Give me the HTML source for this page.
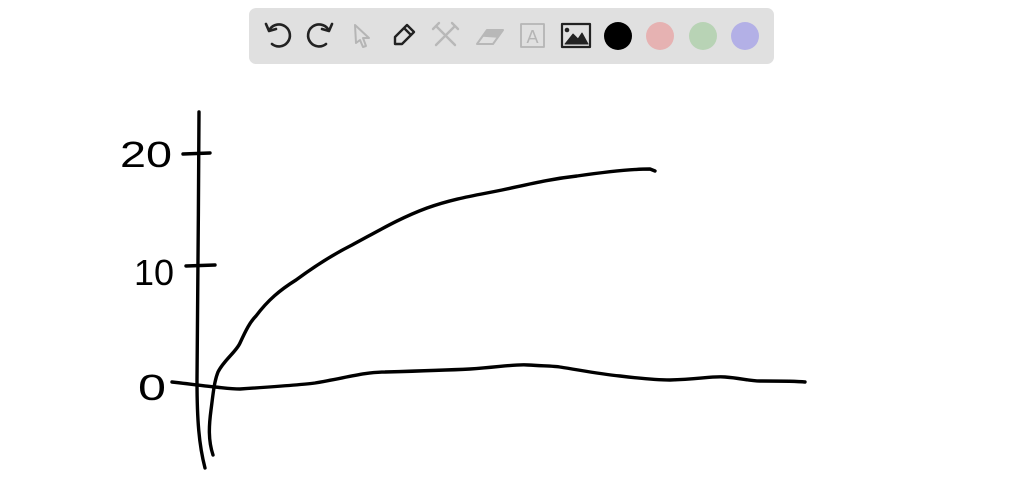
<!DOCTYPE html>
<html><head><meta charset="utf-8"><style>
html,body{margin:0;padding:0;background:#fff;width:1024px;height:490px;overflow:hidden}
.tb{position:absolute;left:249px;top:8px;width:525px;height:56px;background:#e0e0e0;border-radius:7px}
svg{position:absolute;left:0;top:0}
</style></head><body>
<div class="tb"></div>
<svg width="1024" height="490" viewBox="0 0 1024 490">
<g fill="none" stroke-linecap="round" stroke-linejoin="round">
<!-- undo -->
<path d="M270 29 A11 11 0 1 1 272 44" stroke="#222" stroke-width="2.6"/>
<path d="M266 24 L269 31 L276 29" stroke="#222" stroke-width="2.6"/>
<!-- redo -->
<path d="M328 29 A11 11 0 1 0 326 44" stroke="#222" stroke-width="2.6"/>
<path d="M332 24 L329 31 L322 29" stroke="#222" stroke-width="2.6"/>
<!-- pointer -->
<path d="M355 25 L369 38 L363 38 L366 46 L363 47 L360 40 L356 43 Z" stroke="#b5b5b5" stroke-width="2"/>
<!-- pencil -->
<path d="M395 44 L395 37 L407 25 L414 32 L402 44 Z M404 28 L411 35" stroke="#222" stroke-width="2.4"/>
<!-- tools -->
<path d="M436 26 L455 45 M455 26 L436 45 M433 29 L439 23 M452 23 L458 29" stroke="#b8b8b8" stroke-width="2.4"/>
<!-- eraser -->
<path d="M477 44 L487 30 L503 30 L493 44 Z" stroke="#b8b8b8" stroke-width="2"/>
<path d="M483 36 L487 30 L503 30 L498 37 Z" fill="#b8b8b8" stroke="#b8b8b8" stroke-width="1.5"/>
<!-- text box -->
<rect x="521" y="24" width="23" height="23" stroke="#b5b5b5" stroke-width="1.8"/>
<!-- image -->
<rect x="562" y="24" width="28" height="23" stroke="#222" stroke-width="2.2"/>
<path d="M565 44 L573 34 L578 39 L582 33 L588 44 Z" fill="#222" stroke="#222" stroke-width="1"/>
<circle cx="567" cy="30" r="2.3" fill="#222" stroke="none"/>
</g>
<text x="532.5" y="43" font-family="Liberation Sans, sans-serif" font-size="18" fill="#b5b5b5" text-anchor="middle">A</text>
<circle cx="618" cy="36" r="14" fill="#000"/>
<circle cx="660" cy="36" r="14" fill="#e6b2b2"/>
<circle cx="703" cy="36" r="14" fill="#b8d3b5"/>
<circle cx="745" cy="36" r="14" fill="#b3b0e6"/>

<g fill="none" stroke="#000" stroke-width="3.4" stroke-linecap="round" stroke-linejoin="round">
<path d="M199 112 C199 200 197 300 197 380 C197 420 199 445 205 468"/>
<path d="M183 154 L210 153"/>
<path d="M186 266 L215 265"/>
<path d="M172 382 C190 384 205 386 215 387 C225 388 232 389 240 389 C270 387 300 385 315 383 C345 378 365 372 385 372 C420 371 450 370 470 369 C500 367 515 364 528 365 C545 366 555 366 560 367 C585 371 600 374 620 376 C645 379 660 380 670 380 C700 379 712 376 725 377 C740 378 750 381 760 381 C780 381 795 381 805 382"/>
<path d="M213 455 C208 440 209 425 211 410 C213 395 214 382 218 372 C224 360 236 352 240 343 C246 330 250 322 256 316 C268 300 280 290 296 280 C315 266 332 255 352 245 C380 230 400 218 427 208 C455 198 478 195 502 190 C530 184 550 179 577 176 C605 172 630 169 650 169 L655 171"/>
</g>
<g font-family="Liberation Sans, sans-serif" font-size="36" fill="#000">
<text x="120" y="167" textLength="52" lengthAdjust="spacingAndGlyphs">20</text>
<text x="134" y="285" textLength="40" lengthAdjust="spacingAndGlyphs">10</text>
<text x="138" y="400" textLength="28" lengthAdjust="spacingAndGlyphs">0</text>
</g>
</svg>
</body></html>
